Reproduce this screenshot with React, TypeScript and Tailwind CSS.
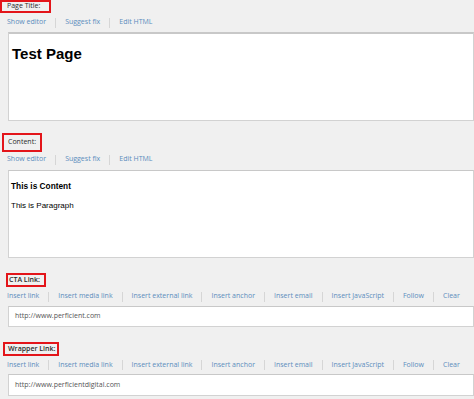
const editorLinks = ['Show editor', 'Suggest fix', 'Edit HTML'];
const linkLinks = [
  'Insert link',
  'Insert media link',
  'Insert external link',
  'Insert anchor',
  'Insert email',
  'Insert JavaScript',
  'Follow',
  'Clear',
];

function FieldLabel({ text, className }: { text: string; className: string }) {
  return (
    <div className={`flex items-center border-2 border-[#e3151a] text-[7px] text-[#2b2b2b] ${className}`}>
      {text}
    </div>
  );
}

function Toolbar({ items, className }: { items: string[]; className: string }) {
  return (
    <div className={`flex items-center pl-[7px] text-[7px] text-[#5b8dbd] ${className}`}>
      {items.map((item, i) => (
        <div key={item} className="flex items-center">
          {i > 0 && <span className="mx-[9px] h-[10px] w-px bg-[#d6d6d6]"></span>}
          <span>{item}</span>
        </div>
      ))}
    </div>
  );
}

export default function App() {
  return (
    <div className="h-[399px] w-[474px] overflow-hidden bg-[#f0f0f0] font-['Open_Sans',sans-serif]">
      {/* Page title */}
      <FieldLabel text="Page Title:" className="ml-0 h-[13px] w-[51px] pl-[5px]" />
      <Toolbar items={editorLinks} className="h-[19px]" />
      <div className="ml-2 h-[89px] border border-t-2 border-[#d2d2d2] border-t-[#c8c8c8] bg-white px-[3px] pt-[9px] font-['Liberation_Sans',Arial,sans-serif] text-[15px] font-bold text-black">
        Test Page
      </div>

      {/* Content */}
      <FieldLabel text="Content:" className="mt-[12px] ml-[2px] h-[19px] w-[40px] pl-[4px]" />
      <Toolbar items={editorLinks} className="h-[18px] pb-[3px]" />
      <div className="ml-2 h-[88px] border border-[#d2d2d2] border-t-[#c8c8c8] bg-white px-[2px] pt-[9px] font-['Liberation_Sans',Arial,sans-serif] text-black">
        <div className="text-[8.3px] font-bold">This is Content</div>
        <div className="mt-[8px] text-[8px]">This is Paragraph</div>
      </div>

      {/* CTA link */}
      <FieldLabel text="CTA Link:" className="mt-[15px] ml-[6px] h-[14px] w-[40px] pl-[1px] font-semibold" />
      <Toolbar items={linkLinks} className="h-[19px]" />
      <div className="ml-2 flex h-[21px] items-center border border-[#d2d2d2] border-t-[#c8c8c8] bg-white pl-[6px] text-[7px] text-[#555]">
        http://www.perficient.com
      </div>

      {/* Wrapper link */}
      <FieldLabel text="Wrapper Link:" className="mt-[15px] ml-[3px] h-[14px] w-[56px] pl-[3px] font-semibold" />
      <Toolbar items={linkLinks} className="h-[18px]" />
      <div className="ml-2 flex h-[22px] items-center border border-[#d2d2d2] border-t-[#c8c8c8] bg-white pl-[6px] text-[7px] text-[#555]">
        http://www.perficientdigital.com
      </div>
    </div>
  );
}
